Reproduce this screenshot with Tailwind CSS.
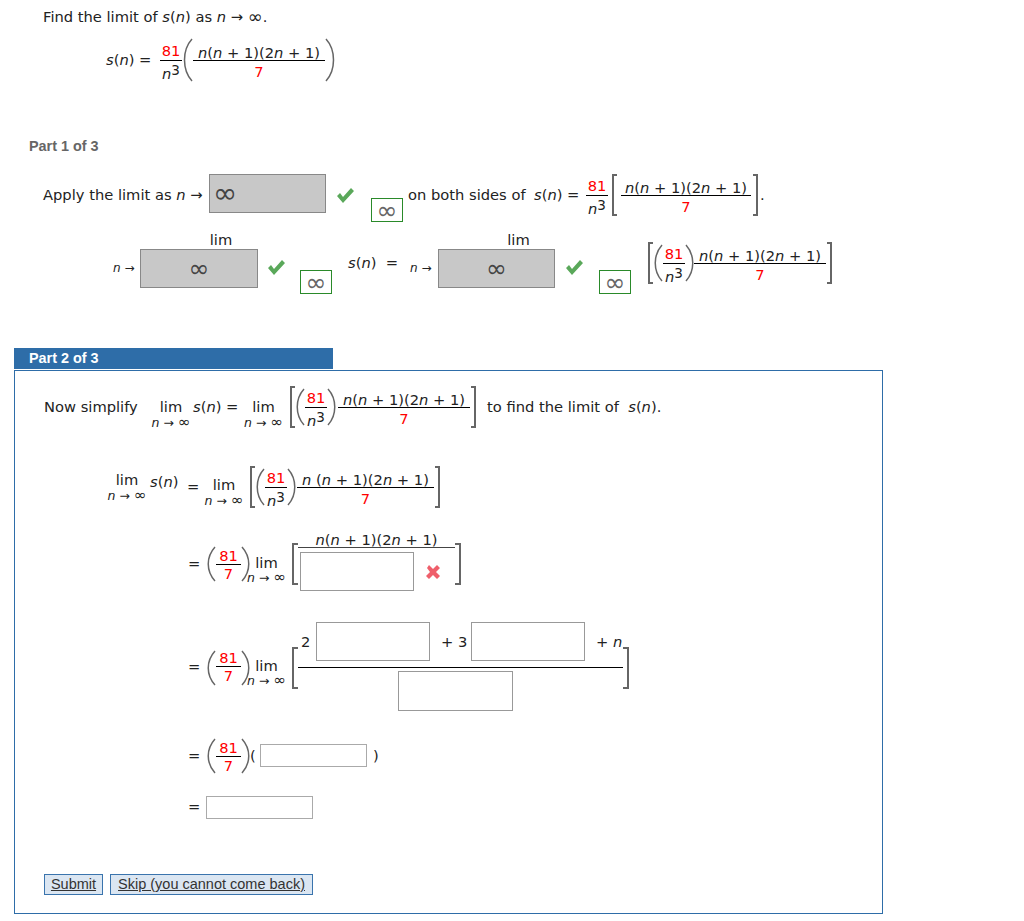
<!DOCTYPE html>
<html lang="en">
<head>
    <meta charset="UTF-8">
    <title>Limit of s(n)</title>
    <script src="https://cdn.jsdelivr.net/npm/@tailwindcss/browser@4"></script>
</head>
<body class="bg-white text-[14.7px] text-[#222] font-['DejaVu_Sans',sans-serif] w-[1024px] h-[921px] overflow-hidden">

    <!-- Question -->
    <div class="flex items-center h-[22px] mt-[6px] pl-[43px] leading-[22px] whitespace-nowrap">Find the limit of&nbsp;<i>s</i>(<i>n</i>)&nbsp;as&nbsp;<i>n</i>&nbsp;→&nbsp;<span class="text-[18px] leading-none">∞</span>.</div>
    <div class="flex items-center h-[48px] mt-[8px] pl-[106px]">
        <span class="w-[54px] whitespace-nowrap"><i>s</i>(<i>n</i>)&nbsp;=</span>
        <span class="flex flex-col items-center w-[22px]">
            <span class="w-full text-center h-[21px] leading-[22px] border-b border-black text-[#f00]">81</span>
            <span class="h-[20px] leading-[25px] whitespace-nowrap"><i>n</i><span class="align-[4px] text-[13.5px] leading-none">3</span></span>
        </span>
        <svg class="ml-[1px]" width="10" height="44" viewBox="0 0 10 44"><path d="M9 1C-1 12 -1 32 9 43" fill="none" stroke="#666" stroke-width="1.5"/></svg>
        <span class="flex flex-col items-center w-[132px]">
            <span class="w-full text-center h-[21px] leading-[25px] border-b border-black whitespace-nowrap"><i>n</i>(<i>n</i> + 1)(2<i>n</i> + 1)</span>
            <span class="h-[20px] leading-[22px] text-[#f00]">7</span>
        </span>
        <svg width="10" height="44" viewBox="0 0 10 44"><path d="M1 1C11 12 11 32 1 43" fill="none" stroke="#666" stroke-width="1.5"/></svg>
    </div>

    <div class="h-[20px] mt-[52px] pl-[29px] leading-[20px] font-['Liberation_Sans',sans-serif] font-bold text-[14.4px] text-[#666]">Part 1 of 3</div>

    <!-- Part 1 -->
    <div class="flex items-center h-[44px] mt-[17px] pl-[43px]">
        <span class="w-[166px] whitespace-nowrap">Apply the limit as <i>n</i> →</span>
        <span class="self-start mt-[1px] w-[117px] h-[39px] bg-[#c8c8c8] border border-[#888] flex items-center pl-[3px] text-[29px] leading-none text-[#444]">∞</span>
        <svg class="ml-[10px]" width="19" height="17" viewBox="0 0 19 17"><path d="M1 9L4 6L7 10L15 1L18 4L7 16Z" fill="#5aa85a"/></svg>
        <span class="self-start mt-[25px] ml-[16px] w-[32px] h-[24px] border border-[#2a8a2a] flex items-center justify-center text-[25px] leading-none text-[#666]">∞</span>
        <span class="ml-[5px] w-[126px] whitespace-nowrap">on both sides of</span>
        <span class="w-[52px] whitespace-nowrap"><i>s</i>(<i>n</i>)&nbsp;=</span>
        <span class="flex flex-col items-center w-[22px]">
            <span class="w-full text-center h-[21px] leading-[22px] border-b border-black text-[#f00]">81</span>
            <span class="h-[20px] leading-[25px] whitespace-nowrap"><i>n</i><span class="align-[4px] text-[13.5px] leading-none">3</span></span>
        </span>
        <span class="ml-[4px] w-[5px] h-[42px] border-2 border-r-0 border-[#666]"></span>
        <span class="ml-[4px] flex flex-col items-center w-[130px]">
            <span class="w-full text-center h-[21px] leading-[25px] border-b border-black whitespace-nowrap"><i>n</i>(<i>n</i> + 1)(2<i>n</i> + 1)</span>
            <span class="h-[20px] leading-[22px] text-[#f00]">7</span>
        </span>
        <span class="ml-[2px] w-[5px] h-[42px] border-2 border-l-0 border-[#666]"></span>
        <span class="ml-[2px]">.</span>
    </div>

    <div class="flex items-center h-[66px] mt-[13px] pl-[113px]">
        <span class="self-start mt-[31px] w-[27px] text-[12px] leading-[14px] whitespace-nowrap"><i>n</i> →</span>
        <span class="self-start flex flex-col items-center w-[118px]">
            <span class="h-[19px] leading-[20px] pl-[44px]">lim</span>
            <span class="w-full h-[39px] bg-[#c8c8c8] border border-[#888] flex items-center justify-center text-[25px] leading-none text-[#444]">∞</span>
        </span>
        <svg class="ml-[9px] mt-[8px]" width="19" height="17" viewBox="0 0 19 17"><path d="M1 9L4 6L7 10L15 1L18 4L7 16Z" fill="#5aa85a"/></svg>
        <span class="self-start mt-[40px] ml-[14px] w-[32px] h-[24px] border border-[#2a8a2a] flex items-center justify-center text-[25px] leading-none text-[#666]">∞</span>
        <span class="ml-[16px] w-[62px] whitespace-nowrap"><i>s</i>(<i>n</i>)&nbsp;&nbsp;=</span>
        <span class="self-start mt-[31px] w-[28px] text-[12px] leading-[14px] whitespace-nowrap"><i>n</i> →</span>
        <span class="self-start flex flex-col items-center w-[117px]">
            <span class="h-[19px] leading-[20px] pl-[44px]">lim</span>
            <span class="w-full h-[39px] bg-[#c8c8c8] border border-[#888] flex items-center justify-center text-[25px] leading-none text-[#444]">∞</span>
        </span>
        <svg class="ml-[10px] mt-[8px]" width="19" height="17" viewBox="0 0 19 17"><path d="M1 9L4 6L7 10L15 1L18 4L7 16Z" fill="#5aa85a"/></svg>
        <span class="self-start mt-[40px] ml-[15px] w-[32px] h-[24px] border border-[#2a8a2a] flex items-center justify-center text-[25px] leading-none text-[#666]">∞</span>
        <span class="ml-[17px] w-[5px] h-[42px] border-2 border-r-0 border-[#666]"></span>
        <svg class="ml-[1px]" width="9" height="38" viewBox="0 0 9 38"><path d="M8 1C-1 11 -1 27 8 37" fill="none" stroke="#666" stroke-width="1.5"/></svg>
        <span class="flex flex-col items-center w-[22px]">
            <span class="w-full text-center h-[21px] leading-[22px] border-b border-black text-[#f00]">81</span>
            <span class="h-[20px] leading-[25px] whitespace-nowrap"><i>n</i><span class="align-[4px] text-[13.5px] leading-none">3</span></span>
        </span>
        <svg width="9" height="38" viewBox="0 0 9 38"><path d="M1 1C10 11 10 27 1 37" fill="none" stroke="#666" stroke-width="1.5"/></svg>
        <span class="flex flex-col items-center w-[132px]">
            <span class="w-full text-center h-[21px] leading-[25px] border-b border-black whitespace-nowrap"><i>n</i>(<i>n</i> + 1)(2<i>n</i> + 1)</span>
            <span class="h-[20px] leading-[22px] text-[#f00]">7</span>
        </span>
        <span class="ml-[1px] w-[5px] h-[42px] border-2 border-l-0 border-[#666]"></span>
    </div>

    <!-- Part 2 -->
    <div class="ml-[14px] mt-[52px] w-[319px] h-[21px] pl-[15px] bg-[#2e6da8] text-white font-['Liberation_Sans',sans-serif] font-bold text-[14.4px] leading-[21px]">Part 2 of 3</div>
    <div class="ml-[14px] mt-[1px] w-[869px] h-[544px] border border-[#2e6da8] pt-[14px]">

        <div class="flex items-center h-[44px] pl-[29px]">
            <span class="w-[108px] whitespace-nowrap">Now simplify</span>
            <span class="self-start mt-[14px] w-[38px] flex flex-col items-center whitespace-nowrap"><span class="leading-[16px]">lim</span><span class="text-[12.5px] leading-[11px]"><i>n</i> → <span class="text-[15px] leading-none">∞</span></span></span>
            <span class="ml-[3px] w-[52px] whitespace-nowrap"><i>s</i>(<i>n</i>)&nbsp;=</span>
            <span class="self-start mt-[14px] w-[37px] flex flex-col items-center whitespace-nowrap"><span class="leading-[16px]">lim</span><span class="text-[12.5px] leading-[11px]"><i>n</i> → <span class="text-[15px] leading-none">∞</span></span></span>
            <span class="ml-[8px] w-[5px] h-[42px] border-2 border-r-0 border-[#666]"></span>
            <svg class="ml-[1px]" width="9" height="38" viewBox="0 0 9 38"><path d="M8 1C-1 11 -1 27 8 37" fill="none" stroke="#666" stroke-width="1.5"/></svg>
            <span class="flex flex-col items-center w-[22px]">
                <span class="w-full text-center h-[21px] leading-[22px] border-b border-black text-[#f00]">81</span>
                <span class="h-[20px] leading-[25px] whitespace-nowrap"><i>n</i><span class="align-[4px] text-[13.5px] leading-none">3</span></span>
            </span>
            <svg width="9" height="38" viewBox="0 0 9 38"><path d="M1 1C10 11 10 27 1 37" fill="none" stroke="#666" stroke-width="1.5"/></svg>
            <span class="ml-[2px] flex flex-col items-center w-[132px]">
                <span class="w-full text-center h-[21px] leading-[25px] border-b border-black whitespace-nowrap"><i>n</i>(<i>n</i> + 1)(2<i>n</i> + 1)</span>
                <span class="h-[20px] leading-[22px] text-[#f00]">7</span>
            </span>
            <span class="ml-[1px] w-[5px] h-[42px] border-2 border-l-0 border-[#666]"></span>
            <span class="ml-[11px] whitespace-nowrap">to find the limit of&nbsp;&nbsp;<i>s</i>(<i>n</i>).</span>
        </div>

        <div class="flex items-center h-[44px] mt-[36px] pl-[93px]">
            <span class="self-start mt-[7px] w-[38px] flex flex-col items-center whitespace-nowrap"><span class="leading-[16px]">lim</span><span class="text-[12.5px] leading-[11px]"><i>n</i> → <span class="text-[15px] leading-none">∞</span></span></span>
            <span class="ml-[4px] mt-[-10px] w-[37px] whitespace-nowrap"><i>s</i>(<i>n</i>)</span>
            <span class="w-[18px]">=</span>
            <span class="self-start mt-[12px] w-[38px] flex flex-col items-center whitespace-nowrap"><span class="leading-[16px]">lim</span><span class="text-[12.5px] leading-[11px]"><i>n</i> → <span class="text-[15px] leading-none">∞</span></span></span>
            <span class="ml-[7px] w-[5px] h-[42px] border-2 border-r-0 border-[#666]"></span>
            <svg class="ml-[1px]" width="9" height="38" viewBox="0 0 9 38"><path d="M8 1C-1 11 -1 27 8 37" fill="none" stroke="#666" stroke-width="1.5"/></svg>
            <span class="flex flex-col items-center w-[22px]">
                <span class="w-full text-center h-[21px] leading-[22px] border-b border-black text-[#f00]">81</span>
                <span class="h-[20px] leading-[25px] whitespace-nowrap"><i>n</i><span class="align-[4px] text-[13.5px] leading-none">3</span></span>
            </span>
            <svg width="9" height="38" viewBox="0 0 9 38"><path d="M1 1C10 11 10 27 1 37" fill="none" stroke="#666" stroke-width="1.5"/></svg>
            <span class="ml-[1px] flex flex-col items-center w-[137px]">
                <span class="w-full text-center h-[21px] leading-[25px] border-b border-black whitespace-nowrap"><i>n</i> (<i>n</i> + 1)(2<i>n</i> + 1)</span>
                <span class="h-[20px] leading-[22px] text-[#f00]">7</span>
            </span>
            <span class="ml-[1px] w-[5px] h-[42px] border-2 border-l-0 border-[#666]"></span>
        </div>

        <!-- Empty answer fraction -->
        <div class="flex items-center h-[68px] mt-[21px] pl-[173px]">
            <span class="w-[19px]">=</span>
            <svg width="9" height="36" viewBox="0 0 9 36"><path d="M8 1C-1 11 -1 25 8 35" fill="none" stroke="#666" stroke-width="1.5"/></svg>
            <span class="flex flex-col items-center w-[25px]">
                <span class="w-full text-center h-[19px] leading-[20px] border-b border-black text-[#f00]">81</span>
                <span class="h-[18px] leading-[18px] text-[#f00]">7</span>
            </span>
            <svg width="9" height="36" viewBox="0 0 9 36"><path d="M1 1C10 11 10 25 1 35" fill="none" stroke="#666" stroke-width="1.5"/></svg>
            <span class="self-start mt-[25px] ml-[-3px] w-[39px] flex flex-col items-center whitespace-nowrap"><span class="leading-[15px]">lim</span><span class="text-[12.5px] leading-[11px]"><i>n</i> → <span class="text-[15px] leading-none">∞</span></span></span>
            <span class="self-start mt-[13px] ml-[6px] w-[6px] h-[42px] border-2 border-r-0 border-[#666]"></span>
            <span class="self-start flex flex-col w-[157px]">
                <span class="h-[18px] leading-[20px] text-center border-b border-[#444] w-full whitespace-nowrap"><i>n</i>(<i>n</i> + 1)(2<i>n</i> + 1)</span>
                <span class="flex items-center mt-[4px] ml-[2px]">
                    <span class="w-[114px] h-[39px] bg-white border border-[#999]"></span>
                    <svg class="ml-[11px]" width="16" height="16" viewBox="0 0 16 16"><path d="M2 4L4 1L8 5L12 1L15 4L11 8L15 12L12 15L8 11L4 15L1 12L5 8Z" fill="#ef5f6b"/></svg>
                </span>
            </span>
            <span class="self-start mt-[13px] w-[6px] h-[42px] border-2 border-l-0 border-[#666]"></span>
        </div>

        <div class="flex items-start h-[92px] mt-[24px] pl-[173px]">
            <span class="w-[19px] mt-[34px]">=</span>
            <svg class="mt-[28px]" width="9" height="36" viewBox="0 0 9 36"><path d="M8 1C-1 11 -1 25 8 35" fill="none" stroke="#666" stroke-width="1.5"/></svg>
            <span class="mt-[26px] flex flex-col items-center w-[25px]">
                <span class="w-full text-center h-[19px] leading-[20px] border-b border-black text-[#f00]">81</span>
                <span class="h-[18px] leading-[18px] text-[#f00]">7</span>
            </span>
            <svg class="mt-[28px]" width="9" height="36" viewBox="0 0 9 36"><path d="M1 1C10 11 10 25 1 35" fill="none" stroke="#666" stroke-width="1.5"/></svg>
            <span class="mt-[36px] ml-[-3px] w-[39px] flex flex-col items-center whitespace-nowrap"><span class="leading-[15px]">lim</span><span class="text-[12.5px] leading-[11px]"><i>n</i> → <span class="text-[15px] leading-none">∞</span></span></span>
            <span class="mt-[25px] ml-[6px] w-[6px] h-[42px] border-2 border-r-0 border-[#666]"></span>
            <span class="flex flex-col w-[325px]">
                <span class="h-[46px] flex items-start border-b border-black">
                    <span class="ml-[3px] mt-[9px] w-[15px]">2</span>
                    <span class="w-[114px] h-[39px] bg-white border border-[#999]"></span>
                    <span class="ml-[11px] mt-[9px] w-[30px] whitespace-nowrap">+ 3</span>
                    <span class="w-[114px] h-[39px] bg-white border border-[#999]"></span>
                    <span class="ml-[11px] mt-[9px] whitespace-nowrap">+ <i>n</i></span>
                </span>
                <span class="mt-[3px] ml-[100px] w-[115px] h-[40px] bg-white border border-[#999]"></span>
            </span>
            <span class="mt-[25px] w-[6px] h-[42px] border-2 border-l-0 border-[#666]"></span>
        </div>

        <div class="flex items-center h-[40px] mt-[22px] pl-[173px]">
            <span class="w-[19px]">=</span>
            <svg width="9" height="36" viewBox="0 0 9 36"><path d="M8 1C-1 11 -1 25 8 35" fill="none" stroke="#666" stroke-width="1.5"/></svg>
            <span class="flex flex-col items-center w-[25px]">
                <span class="w-full text-center h-[19px] leading-[20px] border-b border-black text-[#f00]">81</span>
                <span class="h-[18px] leading-[18px] text-[#f00]">7</span>
            </span>
            <svg width="9" height="36" viewBox="0 0 9 36"><path d="M1 1C10 11 10 25 1 35" fill="none" stroke="#666" stroke-width="1.5"/></svg>
            <span class="w-[6px]">(</span>
            <span class="ml-[4px] mb-[2px] w-[107px] h-[23px] bg-white border border-[#aaa]"></span>
            <span class="ml-[6px]">)</span>
        </div>

        <div class="flex items-center h-[23px] mt-[20px] pl-[173px]">
            <span class="w-[18px]">=</span>
            <span class="w-[107px] h-[23px] bg-white border border-[#aaa]"></span>
        </div>

        <div class="flex gap-[7px] mt-[55px] pl-[29px] font-['Liberation_Sans',sans-serif] text-[14.5px] text-[#333]">
            <a href="#" class="w-[59px] h-[21px] leading-[19px] text-center underline bg-[#dbe6f2] border border-[#3a74ad] whitespace-nowrap">Submit</a>
            <a href="#" class="w-[203px] h-[21px] leading-[19px] text-center underline bg-[#dbe6f2] border border-[#3a74ad] whitespace-nowrap">Skip (you cannot come back)</a>
        </div>
    </div>
</body>
</html>
